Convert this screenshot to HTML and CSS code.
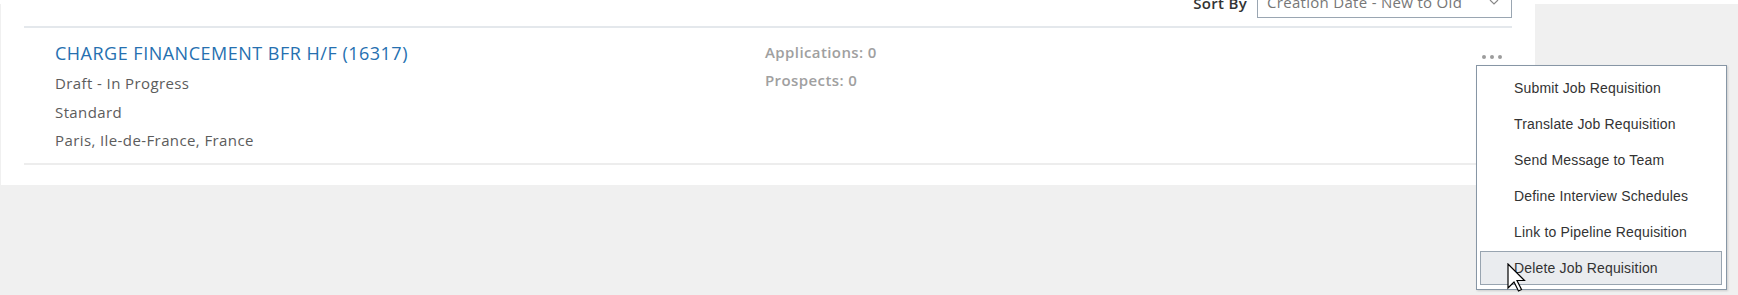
FILE: index.html
```html
<!DOCTYPE html>
<html>
<head>
<meta charset="utf-8">
<link rel="stylesheet" href="styles.css">
</head>
<body>
<div class="page">
  <section class="panel">
    <div class="sortbar">
      <span class="sort-label">Sort By</span>
      <div class="select">
        <span class="select-text">Creation Date - New to Old</span>
        <svg class="chev" width="10" height="6" viewBox="0 0 10 6"><path d="M1 1 L5 5 L9 1" fill="none" stroke="#888" stroke-width="1.2"/></svg>
      </div>
    </div>
    <ul class="list">
      <li class="item">
        <div class="main">
          <a class="title">CHARGE FINANCEMENT BFR H/F (16317)</a>
          <div class="detail">Draft - In Progress</div>
          <div class="detail">Standard</div>
          <div class="detail">Paris, Ile-de-France, France</div>
        </div>
        <div class="stats">
          <div class="stat">Applications: 0</div>
          <div class="stat">Prospects: 0</div>
        </div>
        <div class="actions">
          <span class="dot"></span><span class="dot"></span><span class="dot"></span>
        </div>
      </li>
    </ul>
  </section>
  <ul class="menu">
    <li class="menu-item">Submit Job Requisition</li>
    <li class="menu-item">Translate Job Requisition</li>
    <li class="menu-item">Send Message to Team</li>
    <li class="menu-item">Define Interview Schedules</li>
    <li class="menu-item">Link to Pipeline Requisition</li>
    <li class="menu-item is-hover">Delete Job Requisition</li>
  </ul>
  <svg class="cursor" width="20" height="30" viewBox="0 0 20 30">
    <path d="M1 1 L1 25 L7 19 L11.5 28 L14.5 26.5 L10 17.5 L17.5 17.5 Z" fill="#fff" stroke="#000" stroke-width="1.2" stroke-linejoin="miter"/>
  </svg>
</div>
</body>
</html>
```
FILE: styles.css
```css
* { box-sizing: border-box; }
html, body { margin: 0; padding: 0; }
body {
  width: 1738px;
  height: 295px;
  overflow: hidden;
  background: linear-gradient(#ffffff 0, #ffffff 4px, #f0f0f0 4px);
  font-family: "Open Sans", "Noto Sans", sans-serif;
}
.page {
  position: relative;
  height: 295px;
  display: flow-root;
}
.panel {
  display: flow-root;
  margin-left: 1px;
  width: 1534px;
  height: 185px;
  background: #fff;
  padding: 0 23px;
}
.sortbar {
  margin-top: -14px;
  height: 32px;
  display: flex;
  justify-content: flex-end;
  align-items: center;
  gap: 10px;
}
.sort-label {
  font-size: 15px;
  font-weight: 600;
  letter-spacing: 0.3px;
  color: #333;
  padding-top: 1px;
}
.select {
  width: 255px;
  height: 32px;
  border: 1px solid #9aa6b2;
  display: flex;
  align-items: center;
  justify-content: space-between;
  padding: 0 12px 0 9px;
}
.select-text {
  font-size: 15px;
  letter-spacing: 0.3px;
  color: #777;
}
.list {
  list-style: none;
  margin: 8px 0 0;
  padding: 0;
  border-top: 2px solid #e4e8ec;
  border-bottom: 2px solid #ededed;
}
.item {
  height: 135px;
  display: flex;
  padding: 13px 10px 0 31px;
}
.main {
  width: 710px;
  flex-shrink: 0;
  display: flex;
  flex-direction: column;
}
.title {
  font-size: 18px;
  letter-spacing: 0.5px;
  line-height: 24px;
  color: #2670b0;
  margin-bottom: 4px;
}
.detail {
  font-size: 15px;
  letter-spacing: 0.4px;
  line-height: 28.7px;
  color: #5c5c5c;
}
.stats {
  flex: 1;
  margin-top: -2px;
}
.stat {
  font-size: 15px;
  letter-spacing: 0.4px;
  line-height: 27.7px;
  font-weight: 600;
  color: #a0a0a0;
}
.actions {
  flex-shrink: 0;
  display: flex;
  gap: 4px;
  padding-top: 14px;
  height: 20px;
}
.dot {
  flex-shrink: 0;
  width: 4px;
  height: 4px;
  border-radius: 50%;
  background: #9c9c9c;
}
.menu {
  position: absolute;
  left: 1476px;
  top: 65px;
  width: 251px;
  margin: 0;
  padding: 5px 4px 4px 3px;
  list-style: none;
  background: #fff;
  border: 1px solid #8796a5;
  box-shadow: 1px 1px 2px rgba(0,0,0,0.15);
  display: flex;
  flex-direction: column;
  gap: 2px;
  font-family: "Liberation Sans", Arial, sans-serif;
}
.menu-item {
  height: 34px;
  line-height: 32px;
  padding-left: 33px;
  font-size: 14px;
  letter-spacing: 0.17px;
  color: #333;
  border: 1px solid transparent;
  white-space: nowrap;
}
.menu-item.is-hover {
  background: #eaecef;
  border-color: #98a4b0;
}
.cursor {
  position: absolute;
  left: 1507px;
  top: 263px;
}
```
